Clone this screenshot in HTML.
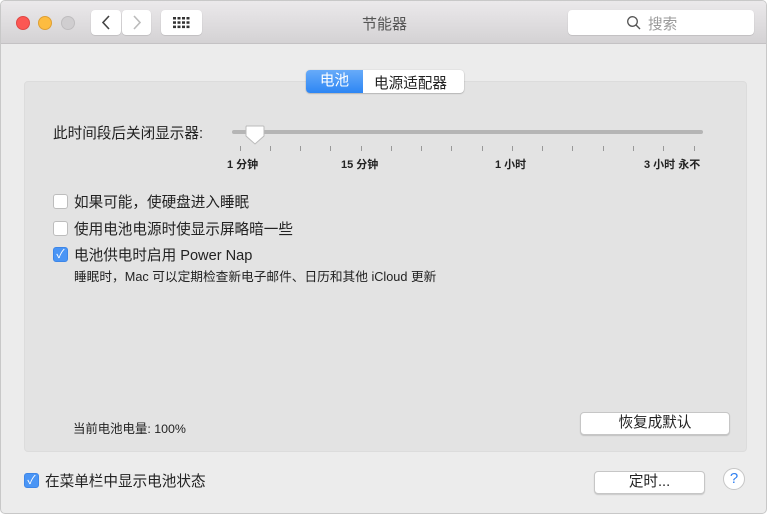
<!DOCTYPE html>
<html><head><meta charset="utf-8"><style>
*{margin:0;padding:0;box-sizing:border-box}
body{width:768px;height:515px;background:#fff;font-family:"Liberation Sans","Noto Sans CJK SC",sans-serif;position:relative;overflow:hidden;color:#222}
.win{position:absolute;left:0;top:0;width:767px;height:514px;border-radius:5px;background:#ececec;border:1px solid #c8c8c8;overflow:hidden}
.tb{position:absolute;left:0;top:0;right:0;height:43px;background:linear-gradient(#ebe9eb,#d4d2d4);border-bottom:1px solid #c4c2c4}
.dot{position:absolute;top:15px;width:14px;height:14px;border-radius:50%}
.btn{position:absolute;background:#fff;border-radius:4px;box-shadow:0 0.5px 1px rgba(0,0,0,.2)}
.abs{position:absolute}
.box{position:absolute;left:23px;top:80px;width:723px;height:371px;background:#e3e3e3;border-radius:4px;border:1px solid #dcdcdc}
.cb{position:absolute;width:15px;height:15px;border-radius:3px;background:#fff;border:1px solid #bdbdbd}
.cbc{background:#4a95f5;border-color:#3d86e8;color:#fff;font-size:12px;line-height:13px;text-align:center}
.t{position:absolute;font-size:14.6px;white-space:nowrap}
.tick{position:absolute;top:145px;width:1px;height:5px;background:#999}
.pb{position:absolute;background:#fff;border-radius:4px;border:1px solid #c6c6c6;box-shadow:0 1px 1px rgba(0,0,0,.15);font-size:14.6px;text-align:center}
.tl{font-size:11px;font-weight:600}
</style></head><body>
<div class="win">
<div class="tb">
<div class="dot" style="left:15px;background:#fc5753;border:1px solid #df4744"></div>
<div class="dot" style="left:37px;background:#fdbc40;border:1px solid #de9f34"></div>
<div class="dot" style="left:60px;background:#d0ced0;border:1px solid #bfbdbf"></div>
<div class="btn" style="left:90px;top:9px;width:30px;height:25px"><svg width="30" height="25"><path d="M18 6 L12 12.5 L18 19" stroke="#444" stroke-width="1.6" fill="none"/></svg></div>
<div class="btn" style="left:121px;top:9px;width:29px;height:25px"><svg width="29" height="25"><path d="M12 6 L18 12.5 L12 19" stroke="#bbb" stroke-width="1.6" fill="none"/></svg></div>
<div class="btn" style="left:160px;top:9px;width:41px;height:25px"><svg width="41" height="25"><g fill="#333">
<rect x="12" y="7" width="3" height="2.5"/><rect x="16.5" y="7" width="3" height="2.5"/><rect x="21" y="7" width="3" height="2.5"/><rect x="25.5" y="7" width="3" height="2.5"/>
<rect x="12" y="11.3" width="3" height="2.5"/><rect x="16.5" y="11.3" width="3" height="2.5"/><rect x="21" y="11.3" width="3" height="2.5"/><rect x="25.5" y="11.3" width="3" height="2.5"/>
<rect x="12" y="15.6" width="3" height="2.5"/><rect x="16.5" y="15.6" width="3" height="2.5"/><rect x="21" y="15.6" width="3" height="2.5"/><rect x="25.5" y="15.6" width="3" height="2.5"/></g></svg></div>
<div class="t" style="left:361px;top:12px;font-size:15px;color:#555">节能器</div>
<div class="btn" style="left:567px;top:9px;width:186px;height:25px"><svg class="abs" style="left:58px;top:5px" width="16" height="16"><circle cx="6.5" cy="6.5" r="4.8" stroke="#555" stroke-width="1.3" fill="none"/><path d="M10 10 L14 14" stroke="#555" stroke-width="1.4"/></svg><span class="t" style="left:80px;top:3px;color:#999">搜索</span></div>
</div>
<div class="box"></div>
<div class="abs" style="left:305px;top:69px;width:158px;height:23px;border-radius:4px;background:#fff;box-shadow:0 0.5px 1.5px rgba(0,0,0,.35)"></div>
<div class="abs" style="left:305px;top:69px;width:57px;height:23px;border-radius:4px 0 0 4px;background:linear-gradient(#67abf9,#2d86f4);color:#fff;font-size:14.6px;text-align:center;line-height:23px">电池</div>
<div class="t" style="left:373px;top:71px">电源适配器</div>

<div class="t" style="left:52px;top:121px">此时间段后关闭显示器:</div>
<div class="abs" style="left:231px;top:129px;width:471px;height:4px;border-radius:2px;background:#b5b5b5"></div>
<svg class="abs" style="left:243px;top:124px" width="22" height="20"><path d="M2 1 H19 Q20 1 20 2 V11 L11 19 L2 11 V2 Q2 1 3 1Z" fill="#fff" stroke="#bbb"/></svg>
<div class="tick" style="left:239px"></div><div class="tick" style="left:269px"></div><div class="tick" style="left:299px"></div><div class="tick" style="left:329px"></div><div class="tick" style="left:360px"></div><div class="tick" style="left:390px"></div><div class="tick" style="left:420px"></div><div class="tick" style="left:450px"></div><div class="tick" style="left:481px"></div><div class="tick" style="left:511px"></div><div class="tick" style="left:541px"></div><div class="tick" style="left:571px"></div><div class="tick" style="left:602px"></div><div class="tick" style="left:632px"></div><div class="tick" style="left:662px"></div><div class="tick" style="left:693px"></div>
<div class="t tl" style="left:226px;top:155px">1 分钟</div>
<div class="t tl" style="left:340px;top:155px">15 分钟</div>
<div class="t tl" style="left:494px;top:155px">1 小时</div>
<div class="t tl" style="left:643px;top:155px">3 小时 永不</div>

<div class="cb" style="left:52px;top:193px"></div><div class="t" style="left:73px;top:190px">如果可能，使硬盘进入睡眠</div>
<div class="cb" style="left:52px;top:220px"></div><div class="t" style="left:73px;top:217px">使用电池电源时使显示屏略暗一些</div>
<div class="cb cbc" style="left:52px;top:246px">✓</div><div class="t" style="left:73px;top:243px">电池供电时启用 Power Nap</div>
<div class="t" style="left:73px;top:265px;font-size:12.7px">睡眠时，Mac 可以定期检查新电子邮件、日历和其他 iCloud 更新</div>

<div class="t" style="left:72px;top:418px;font-size:12.4px">当前电池电量: 100%</div>
<div class="pb" style="left:579px;top:411px;width:150px;height:23px;line-height:21px">恢复成默认</div>

<div class="cb cbc" style="left:23px;top:472px">✓</div><div class="t" style="left:44px;top:469px">在菜单栏中显示电池状态</div>
<div class="pb" style="left:593px;top:470px;width:111px;height:23px;line-height:21px">定时...</div>
<div class="abs" style="left:722px;top:467px;width:22px;height:22px;border-radius:50%;background:#fff;border:1px solid #c6c6c6;color:#2f7ff0;font-size:15px;text-align:center;line-height:20px">?</div>
</div>
</body></html>
